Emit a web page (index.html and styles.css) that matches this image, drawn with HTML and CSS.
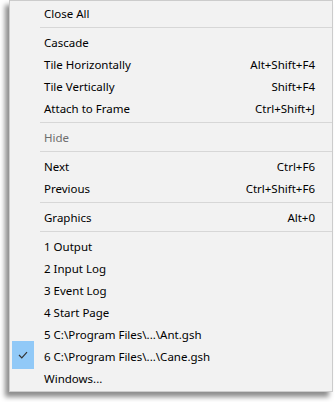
FILE: index.html
```html
<!DOCTYPE html>
<html>
<head>
<meta charset="utf-8">
<link rel="stylesheet" href="styles.css">
</head>
<body>
<div class="menu">
  <div class="item"><span class="label">Close All</span></div>
  <div class="sep"></div>
  <div class="item"><span class="label">Cascade</span></div>
  <div class="item"><span class="label">Tile Horizontally</span><span class="key">Alt+Shift+F4</span></div>
  <div class="item"><span class="label">Tile Vertically</span><span class="key">Shift+F4</span></div>
  <div class="item"><span class="label">Attach to Frame</span><span class="key">Ctrl+Shift+J</span></div>
  <div class="sep"></div>
  <div class="item disabled"><span class="label">Hide</span></div>
  <div class="sep"></div>
  <div class="item"><span class="label">Next</span><span class="key">Ctrl+F6</span></div>
  <div class="item"><span class="label">Previous</span><span class="key">Ctrl+Shift+F6</span></div>
  <div class="sep"></div>
  <div class="item"><span class="label">Graphics</span><span class="key">Alt+0</span></div>
  <div class="sep"></div>
  <div class="item"><span class="label">1 Output</span></div>
  <div class="item"><span class="label">2 Input Log</span></div>
  <div class="item"><span class="label">3 Event Log</span></div>
  <div class="item"><span class="label">4 Start Page</span></div>
  <div class="item"><span class="label">5 C:\Program Files\...\Ant.gsh</span></div>
  <div class="item checked">
    <span class="check"><svg width="10" height="8" viewBox="0 0 10 8"><path d="M1 4 L3.8 6.8 L9 1.2" fill="none" stroke="#333" stroke-width="1.2"/></svg></span>
    <span class="label">6 C:\Program Files\...\Cane.gsh</span>
  </div>
  <div class="item"><span class="label">Windows...</span></div>
</div>
</body>
</html>
```
FILE: styles.css
```css
html, body {
  margin: 0;
  padding: 0;
  background: #ffffff;
}
body {
  width: 335px;
  height: 402px;
  overflow: hidden;
  font-family: "Segoe UI", "Noto Sans", "Open Sans", sans-serif;
  font-size: 11.5px;
  color: #000;
}
.menu {
  margin-left: 9px;
  width: 322px;
  background: #f2f2f2;
  border: 1px solid #cccccc;
  padding: 1px 0 2px 0;
  box-shadow: -4px 5px 5px rgba(0, 0, 0, 0.45);
}
.item {
  position: relative;
  height: 22px;
  display: flex;
  align-items: center;
  padding-left: 34px;
  padding-right: 17px;
}
.label {
  flex: 1;
  white-space: nowrap;
}
.key {
  white-space: nowrap;
}
.disabled {
  color: #6d6d6d;
}
.sep {
  height: 1px;
  background: #d7d7d7;
  margin: 3px 0 3px 30px;
}
.check {
  position: absolute;
  left: 2px;
  top: -4px;
  width: 22px;
  height: 28px;
  background: #91c9f7;
  display: flex;
  align-items: center;
  justify-content: center;
}
```
